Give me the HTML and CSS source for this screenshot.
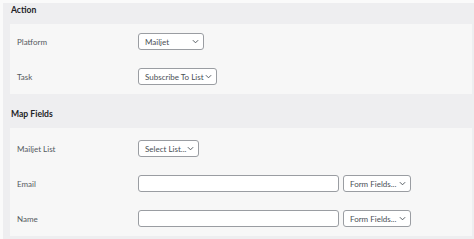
FILE: index.html
```html
<!DOCTYPE html>
<html lang="en">
<head>
  <meta charset="UTF-8" />
  <title>Integration Settings</title>
  <link rel="stylesheet" href="styles.css">
</head>
<body>
  <div class="settings">
    <section class="section">
      <h3 class="section-title section-title--top">Action</h3>
      <div class="panel">
        <div class="field-row">
          <label class="field-label">Platform</label>
          <div class="field-control">
            <div class="select select--platform">
              <span>Mailjet</span>
              <svg class="chevron" viewBox="0 0 8 5" width="7" height="5"><path d="M1 1l3 3 3-3" /></svg>
            </div>
          </div>
        </div>
        <div class="field-row">
          <label class="field-label">Task</label>
          <div class="field-control">
            <div class="select select--task">
              <span>Subscribe To List</span>
              <svg class="chevron" viewBox="0 0 8 5" width="7" height="5"><path d="M1 1l3 3 3-3" /></svg>
            </div>
          </div>
        </div>
      </div>
    </section>

    <section class="section">
      <h3 class="section-title">Map Fields</h3>
      <div class="panel panel--fields">
        <div class="field-row">
          <label class="field-label">Mailjet List</label>
          <div class="field-control">
            <div class="select select--list">
              <span>Select List...</span>
              <svg class="chevron" viewBox="0 0 8 5" width="7" height="5"><path d="M1 1l3 3 3-3" /></svg>
            </div>
          </div>
        </div>
        <div class="field-row">
          <label class="field-label">Email</label>
          <div class="field-control">
            <input class="text-input" type="text">
            <div class="select select--fields">
              <span>Form Fields...</span>
              <svg class="chevron" viewBox="0 0 8 5" width="7" height="5"><path d="M1 1l3 3 3-3" /></svg>
            </div>
          </div>
        </div>
        <div class="field-row">
          <label class="field-label">Name</label>
          <div class="field-control">
            <input class="text-input" type="text">
            <div class="select select--fields">
              <span>Form Fields...</span>
              <svg class="chevron" viewBox="0 0 8 5" width="7" height="5"><path d="M1 1l3 3 3-3" /></svg>
            </div>
          </div>
        </div>
      </div>
    </section>
  </div>
</body>
</html>
```

FILE: styles.css
```css
:root {
  --page-bg: #fafafa;
  --section-bg: #eeeef0;
  --panel-bg: #f7f7f7;
  --heading-color: #1d2327;
  --label-color: #555a60;
  --border-color: #9a9da2;
}

* {
  margin: 0;
  padding: 0;
  box-sizing: border-box;
}

body {
  background: var(--page-bg);
  font-family: Lato, "Open Sans", sans-serif;
  font-size: 8px;
  color: var(--label-color);
  padding: 3px 0 0 3px;
  height: 239px;
  overflow: hidden;
}

.settings {
  background: var(--section-bg);
  height: 100%;
}

.section-title {
  font-size: 8.6px;
  font-weight: bold;
  line-height: 14px;
  color: var(--heading-color);
  padding: 13px 8px 7px;
}

.section-title--top {
  padding: 0 8px 7px;
}

.panel {
  background: var(--panel-bg);
  margin: 0 2px 0 7px;
}

.panel--fields {
  padding-top: 3px;
}

.field-row {
  display: grid;
  grid-template-columns: 121px 1fr;
  align-items: center;
  height: 35px;
  padding-left: 7px;
}

.field-control {
  display: flex;
  align-items: center;
  gap: 4px;
}

.select {
  display: inline-flex;
  align-items: center;
  justify-content: space-between;
  height: 17px;
  padding: 0 4px 0 6px;
  background: #fff;
  border: 1px solid var(--border-color);
  border-radius: 3px;
  color: #4a4f55;
  white-space: nowrap;
}

.select--platform { width: 66px; }
.select--task { width: 79px; }
.select--list { width: 61px; }
.select--fields { width: 68px; }

.chevron {
  flex-shrink: 0;
  fill: none;
  stroke: #50575e;
  stroke-width: 1.1;
}

.text-input {
  width: 201px;
  height: 17px;
  background: #fff;
  border: 1px solid var(--border-color);
  border-radius: 3px;
}
```
